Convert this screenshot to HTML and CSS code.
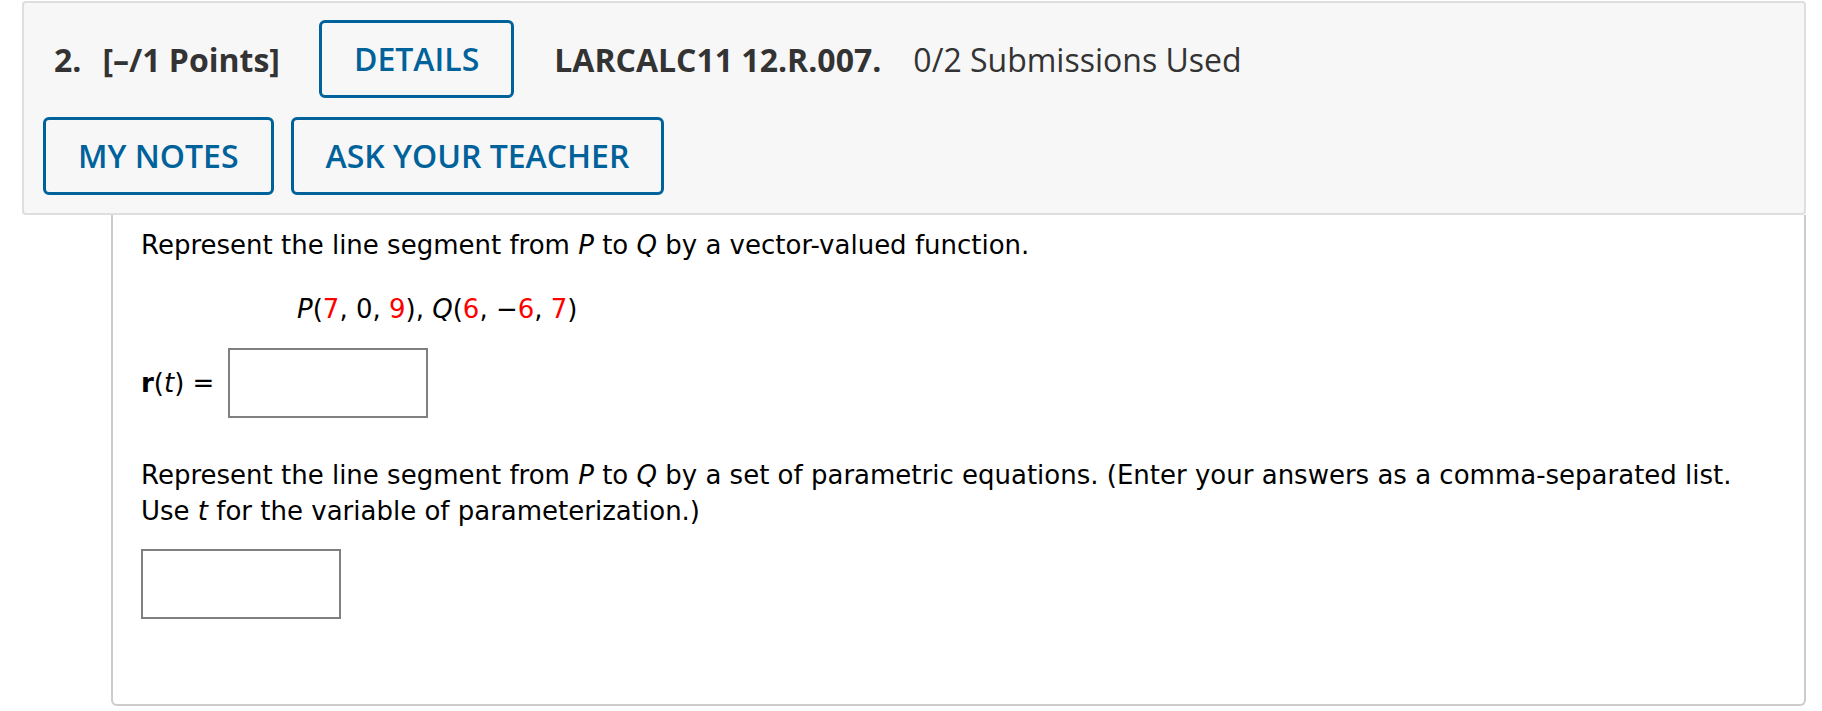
FILE: index.html
```html
<!DOCTYPE html>
<html lang="en">
<head>
<meta charset="utf-8">
<title>Question 2</title>
<link rel="stylesheet" href="styles.css">
</head>
<body>
<div class="question">
  <div class="qhead">
    <div class="row row-top">
      <span class="qnum">2.</span>
      <span class="qpts">[–/1 Points]</span>
      <button class="btn btn-details">DETAILS</button>
      <span class="qid">LARCALC11 12.R.007.</span>
      <span class="qsubs">0/2 Submissions Used</span>
    </div>
    <div class="row row-bottom">
      <button class="btn">MY NOTES</button>
      <button class="btn">ASK YOUR TEACHER</button>
    </div>
  </div>
  <div class="qbody">
    <p class="para para-first">Represent the line segment from <i>P</i> to <i>Q</i> by a vector-valued function.</p>
    <p class="expr"><i>P</i>(<span class="red">7</span>, 0, <span class="red">9</span>), <i>Q</i>(<span class="red">6</span>, −<span class="red">6</span>, <span class="red">7</span>)</p>
    <div class="answer-row">
      <span class="label"><b>r</b>(<i>t</i>) = </span>
      <input class="answer" type="text" aria-label="r(t)">
    </div>
    <p class="para para-second">Represent the line segment from <i>P</i> to <i>Q</i> by a set of parametric equations. (Enter your answers as a comma-separated list.<br>Use <i>t</i> for the variable of parameterization.)</p>
    <input class="answer answer-solo" type="text" aria-label="parametric equations">
  </div>
</div>
</body>
</html>
```

FILE: styles.css
```css
html, body {
  margin: 0;
  padding: 0;
  background: #ffffff;
}

.question {
  padding: 1px 16px 0 22px;
}

.qhead {
  background: #f7f7f7;
  border: 2px solid #dedede;
  border-radius: 4px;
  padding: 17px 19px 18px 19px;
  font-family: "Open Sans", "Liberation Sans", sans-serif;
  color: #333333;
}

.row {
  display: flex;
  align-items: center;
}

.row-bottom {
  margin-top: 19px;
  gap: 17px;
}

.qnum {
  font-size: 32px;
  font-weight: 700;
  margin-left: 11px;
}

.qpts {
  font-size: 32px;
  font-weight: 700;
  margin-left: 21px;
}

.btn {
  font-family: "Open Sans", "Liberation Sans", sans-serif;
  font-size: 32px;
  font-weight: 600;
  line-height: 44px;
  color: #00629b;
  background: transparent;
  border: 3px solid #00629b;
  border-radius: 6px;
  padding: 14px 32px;
  margin: 0;
}

.row-top .btn-details {
  margin-left: 39px;
}

.qid {
  font-size: 32px;
  font-weight: 700;
  margin-left: 40px;
}

.qsubs {
  font-size: 32px;
  font-weight: 400;
  margin-left: 32px;
}

.qbody {
  margin-left: 89px;
  border-left: 2px solid #cccccc;
  border-right: 2px solid #cccccc;
  border-bottom: 2px solid #cccccc;
  border-radius: 0 0 6px 6px;
  padding: 12px 28px 85px 28px;
  font-family: "DejaVu Sans", Verdana, sans-serif;
  font-size: 26px;
  line-height: 36.4px;
  color: #000000;
}

.para {
  margin: 0;
}

.expr {
  margin: 28px 0 0 156px;
}

.red {
  color: #ff0000;
}

.answer-row {
  display: flex;
  align-items: center;
  margin-top: 20px;
}

.label {
  white-space: pre;
}

.answer {
  box-sizing: border-box;
  width: 200px;
  height: 70px;
  border: 2px solid #808080;
  background: #ffffff;
  margin: 0 0 0 5px;
  padding: 0;
  display: block;
}

.para-second {
  margin-top: 39px;
}

.answer-solo {
  margin: 19px 0 0 0;
}
```
